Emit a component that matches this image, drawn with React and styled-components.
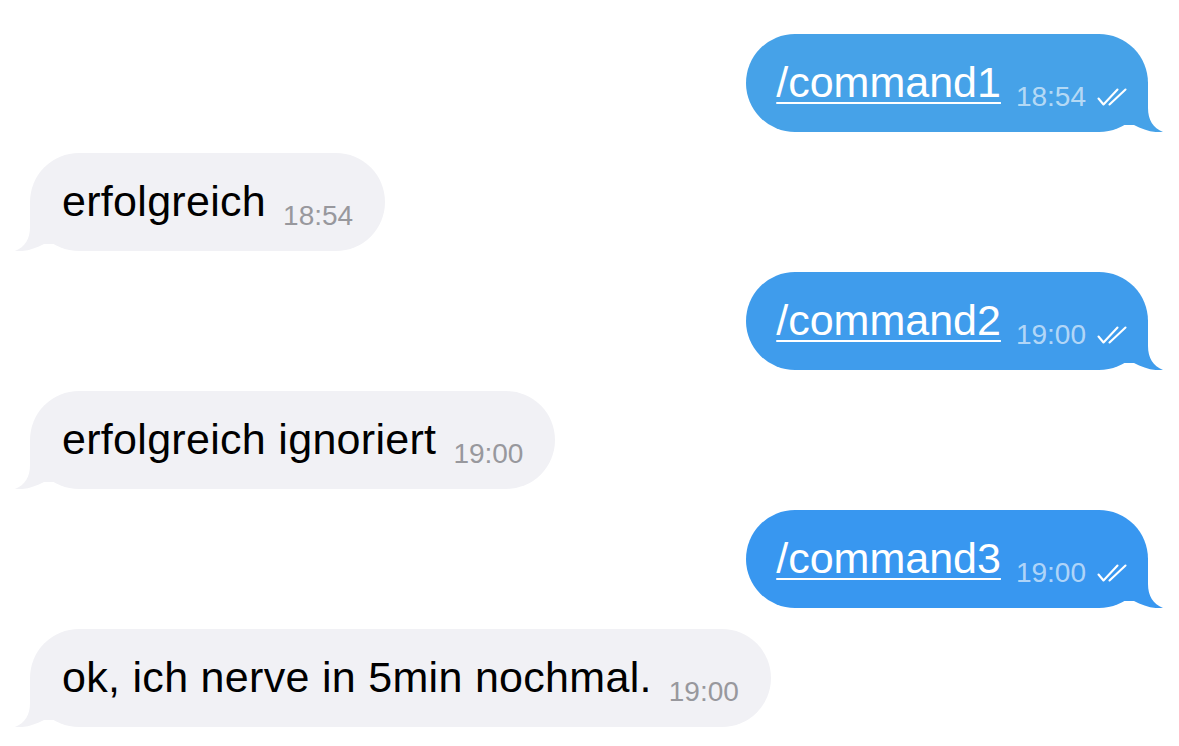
import React from 'react';
import styled, { createGlobalStyle } from 'styled-components';

const GlobalStyle = createGlobalStyle`
  body {
    margin: 0;
    background: #ffffff;
    font-family: "Liberation Sans", Arial, sans-serif;
  }
`;

const Chat = styled.div`
  display: flex;
  flex-direction: column;
  gap: 21px;
  padding: 34px 31px 19px 30px;
`;

const Row = styled.div`
  display: flex;
  justify-content: ${(p) => (p.$out ? 'flex-end' : 'flex-start')};
`;

const Bubble = styled.div`
  position: relative;
  display: flex;
  align-items: flex-start;
  height: 98px;
  box-sizing: border-box;
  padding: ${(p) => (p.$out ? '0 21px 0 30px' : '0 32px 0 32px')};
  border-radius: 49px;
  background: ${(p) => p.$color};
`;

const Text = styled.span`
  position: relative;
  margin-top: 27px;
  font-size: 43px;
  line-height: 1;
  white-space: nowrap;
  letter-spacing: ${(p) => (p.$out ? '0' : '0.3px')};
  color: ${(p) => (p.$out ? '#ffffff' : '#000000')};
  text-decoration: ${(p) => (p.$link ? 'underline' : 'none')};
  text-decoration-thickness: 2px;
  text-underline-offset: 5px;
`;

const Meta = styled.span`
  position: relative;
  display: flex;
  align-items: center;
  gap: 11px;
  margin-top: 49px;
  margin-left: ${(p) => (p.$out ? '15px' : '17px')};
`;

const Time = styled.span`
  font-size: 28px;
  line-height: 1;
  white-space: nowrap;
  color: ${(p) => (p.$out ? 'rgba(255, 255, 255, 0.62)' : '#98989d')};
`;

const CheckIcon = styled.svg`
  flex: none;
  display: block;
  width: 30px;
  height: 18px;
`;

const Tail = styled.svg`
  position: absolute;
  bottom: 0;
  width: 56px;
  height: 50px;
  ${(p) => (p.$out ? 'right: -16px;' : 'left: -16px; transform: scaleX(-1);')}
`;

const Checks = () => (
  <CheckIcon viewBox="0 0 30 18" fill="none" stroke="#ffffff" strokeWidth="2.1" strokeLinecap="round" strokeLinejoin="round">
    <path d="M1.5 10.5 L6.5 16.5 L20.5 1.5" />
    <path d="M12.5 16.5 L28.5 1.5" />
  </CheckIcon>
);

const messages = [
  { out: true, text: '/command1', time: '18:54', color: '#46a2e8' },
  { out: false, text: 'erfolgreich', time: '18:54' },
  { out: true, text: '/command2', time: '19:00', color: '#3f9cec' },
  { out: false, text: 'erfolgreich ignoriert', time: '19:00' },
  { out: true, text: '/command3', time: '19:00', color: '#3897f0' },
  { out: false, text: 'ok, ich nerve in 5min nochmal.', time: '19:00' },
];

const Message = ({ out, text, time, color }) => {
  const fill = out ? color : '#f1f1f5';
  return (
    <Row $out={out}>
      <Bubble $out={out} $color={fill}>
        <Tail $out={out} viewBox="0 0 56 50">
          <path d="M40 0 L40 26 C40 38 45 46 55 50 C46 51 35 48 26 43 L0 43 L0 0 Z" fill={fill} />
        </Tail>
        <Text $out={out} $link={text.startsWith('/')}>{text}</Text>
        <Meta $out={out}>
          <Time $out={out}>{time}</Time>
          {out && <Checks />}
        </Meta>
      </Bubble>
    </Row>
  );
};

const App = () => (
  <>
    <GlobalStyle />
    <Chat>
      {messages.map((m, i) => (
        <Message key={i} {...m} />
      ))}
    </Chat>
  </>
);

export default App;
